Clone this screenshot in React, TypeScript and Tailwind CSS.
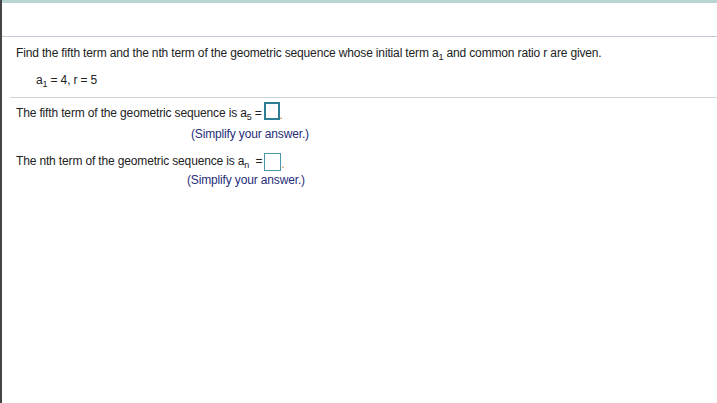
export default function App() {
  return (
    <div
      className="relative h-[403px] w-[717px] overflow-hidden border-l-2 border-[#454545] bg-white text-[12px] leading-[16px] tracking-[-0.15px] text-[#222]"
      style={{ fontFamily: '"Liberation Sans", Arial, sans-serif' }}
    >
      <div className="h-[3px] bg-[#b9d5d3]" />
      <div className="h-[33px]" />
      <div className="border-t border-[#c9cad8]" />

      <div className="pl-[14px] pt-[8px]">
        <p>
          Find the fifth term and the nth term of the geometric sequence whose initial term a
          <sub className="relative top-[3px] text-[9px]">1</sub> and common ratio r are given.
        </p>
        <p className="mt-[11px] pl-[20px]">
          a<sub className="relative top-[3px] text-[9px]">1</sub> = 4, r = 5
        </p>
      </div>

      <div className="ml-[8px] mt-[9px] border-t border-[#d2d3dd]" />

      <div className="pl-[14px]">
        <div className="mt-[4px] flex items-start">
          <span className="mt-[3px]">
            The fifth term of the geometric sequence is a
            <sub className="relative top-[3px] text-[9px]">5</sub> =
          </span>
          <span className="ml-[2px] inline-block h-[18px] w-[16px] border-2 border-[#2c7d95] bg-white" />
          <span className="mt-[5px] text-[#b07a2a]">.</span>
        </div>
        <p className="ml-[175px] mt-[3px] text-[#1f2d7a]">(Simplify your answer.)</p>

        <div className="mt-[11px] flex items-start">
          <span>
            The nth term of the geometric sequence is a
            <sub className="relative top-[3px] mr-[3px] text-[9px]">n</sub> =
          </span>
          <span className="ml-[2px] inline-block h-[18px] w-[17px] border border-[#4b95a9] bg-white" />
          <span className="mt-[3px] text-[#b07a2a]">.</span>
        </div>
        <p className="ml-[171px] text-[#1f2d7a]">(Simplify your answer.)</p>
      </div>
    </div>
  );
}
